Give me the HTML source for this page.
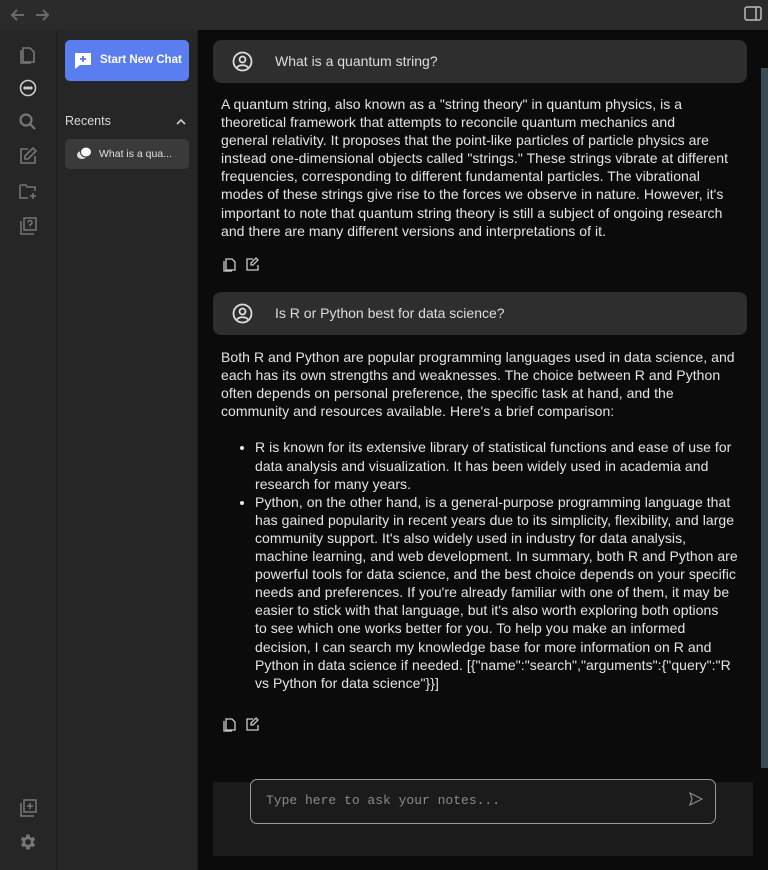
<!DOCTYPE html>
<html><head><style>
*{margin:0;padding:0;box-sizing:border-box}
body{width:768px;height:870px;background:#0b0b0b;font-family:"Liberation Sans","DejaVu Sans",sans-serif;overflow:hidden;position:relative;color:#e6e6e6}
.top{position:absolute;left:0;top:0;width:768px;height:30px;background:#2b2b2b}
.rail{position:absolute;left:0;top:30px;width:57px;height:840px;background:#262626;border-right:1px solid #1e1e1e}
.side{position:absolute;left:57px;top:30px;width:141px;height:840px;background:#262626;border-right:1px solid #1c1c1c}
.ic{position:absolute;left:18px;width:20px;height:20px}
.btn{position:absolute;left:65px;top:40px;width:124px;height:41px;background:#5a7ef0;border-radius:5px;color:#fff;font-weight:bold;font-size:11.5px;line-height:41px;padding-left:35px}
.rec{position:absolute;left:65px;top:114px;color:#d8d8d8;font-size:12.5px}
.item{position:absolute;left:65px;top:139px;width:124px;height:30px;background:#3a3a3a;border-radius:5px;font-size:10.5px;color:#e0e0e0;line-height:30px;padding-left:34px}
.bub{position:absolute;left:213px;width:534px;height:43px;background:#2e2e2e;border-radius:8px;font-size:14px;color:#ddd;line-height:43px;padding-left:62px}
.txt{position:absolute;left:221px;font-size:14px;line-height:18.1px;color:#e4e4e4;white-space:nowrap;letter-spacing:0.05px}
ul{list-style:disc;padding-left:34px}
.act{position:absolute;left:221px}
.scroll{position:absolute;left:761px;top:68px;width:7px;height:700px;background:#3c4b53}
.inarea{position:absolute;left:213px;top:782px;width:540px;height:74px;background:#1b1b1b}
.inp{position:absolute;left:250px;top:779px;width:466px;height:45px;border:1.5px solid #9a9a9a;border-radius:7px;background:#1b1b1b;font-family:"Liberation Mono",monospace;font-size:13px;color:#8a8a8a;line-height:42px;padding-left:15px}
</style></head><body>
<div class="top">
<svg style="position:absolute;left:9px;top:7px" width="40" height="16" viewBox="0 0 40 16" fill="none" stroke="#6a6a6a" stroke-width="2"><path d="M15 8H3M8 3L3 8l5 5"/><path d="M27 8h12M34 3l5 5-5 5"/></svg>
<svg style="position:absolute;left:744px;top:6px" width="18" height="16" viewBox="0 0 18 16" fill="none" stroke="#bbb" stroke-width="1.5"><rect x="1" y="1" width="16" height="13" rx="2"/><path d="M12 1v13"/></svg>
</div>
<div class="rail">
<svg class="ic" style="top:14px" viewBox="0 0 20 20" fill="none" stroke="#777" stroke-width="1.6"><path d="M5 4h7l4 4v10H5z"/><path d="M3 6v13h10"/></svg>
<svg class="ic" style="top:48px" viewBox="0 0 20 20" fill="none" stroke="#ccc" stroke-width="1.6"><circle cx="10" cy="10" r="7.5"/><circle cx="7" cy="10" r=".8" fill="#ccc"/><circle cx="10" cy="10" r=".8" fill="#ccc"/><circle cx="13" cy="10" r=".8" fill="#ccc"/></svg>
<svg class="ic" style="top:82px" viewBox="0 0 20 20" fill="none" stroke="#777" stroke-width="2.2"><circle cx="8" cy="8" r="5.5"/><path d="M12 12l5 5"/></svg>
<svg class="ic" style="top:116px" viewBox="0 0 20 20" fill="none" stroke="#777" stroke-width="1.6"><path d="M10 3H3v14h14v-7"/><path d="M15 2l3 3-8 8H7v-3z"/></svg>
<svg class="ic" style="top:151px" viewBox="0 0 20 20" fill="none" stroke="#777" stroke-width="1.5"><path d="M2 4h6l1 2h8v4M2 4v13h8"/><path d="M15 12v6M12 15h6"/></svg>
<svg class="ic" style="top:186px" viewBox="0 0 20 20" fill="none" stroke="#777" stroke-width="1.5"><rect x="6" y="2" width="12" height="12"/><path d="M3 5v13h13"/><path d="M10 6.5a2 2 0 1 1 2 2v1.5M12 11.5v.5"/></svg>
<svg class="ic" style="top:768px" viewBox="0 0 20 20" fill="none" stroke="#777" stroke-width="1.5"><rect x="6" y="2" width="12" height="12"/><path d="M3 5v13h13M12 5v6M9 8h6"/></svg>
<svg class="ic" style="top:802px" viewBox="0 0 24 24" fill="#777"><path d="M19.4 13a7.5 7.5 0 0 0 0-2l2.1-1.6-2-3.5-2.5 1a7 7 0 0 0-1.7-1L15 3h-4l-.4 2.8a7 7 0 0 0-1.7 1l-2.5-1-2 3.5L6.6 11a7.5 7.5 0 0 0 0 2l-2.1 1.6 2 3.5 2.5-1a7 7 0 0 0 1.7 1L11 21h4l.4-2.8a7 7 0 0 0 1.7-1l2.5 1 2-3.5zM13 15.5a3.5 3.5 0 1 1 0-7 3.5 3.5 0 0 1 0 7z" transform="translate(-1 0)"/></svg>
</div>
<div class="side"></div>
<div class="btn">Start New Chat</div>
<svg style="position:absolute;left:74px;top:52px" width="18" height="18" viewBox="0 0 18 18"><path d="M1 1h16v12H6l-5 4z" fill="#fff"/><path d="M9 4v6M6 7h6" stroke="#5a7ef0" stroke-width="1.8"/></svg>
<div class="rec">Recents</div>
<svg style="position:absolute;left:176px;top:118px" width="10" height="7" viewBox="0 0 10 7" fill="none" stroke="#ccc" stroke-width="1.6"><path d="M1 6l4-4 4 4"/></svg>
<div class="item">What is a qua...</div>
<svg style="position:absolute;left:76px;top:146px" width="16" height="15" viewBox="0 0 16 15"><ellipse cx="6" cy="9" rx="5" ry="4" fill="#ddd"/><ellipse cx="10" cy="6" rx="5.5" ry="5" fill="#fff" stroke="#3a3a3a"/></svg>

<div class="scroll"></div>
<div class="bub" style="top:40px">What is a quantum string?</div>
<svg style="position:absolute;left:232px;top:51px" width="21" height="21" viewBox="0 0 21 21" fill="none" stroke="#ddd" stroke-width="1.8"><circle cx="10.5" cy="10.5" r="9"/><circle cx="10.5" cy="8.5" r="3"/><path d="M5 16.5c2-3 9-3 11 0"/></svg>
<div class="txt" style="top:95px">A quantum string, also known as a "string theory" in quantum physics, is a<br>theoretical framework that attempts to reconcile quantum mechanics and<br>general relativity. It proposes that the point-like particles of particle physics are<br>instead one-dimensional objects called "strings." These strings vibrate at different<br>frequencies, corresponding to different fundamental particles. The vibrational<br>modes of these strings give rise to the forces we observe in nature. However, it's<br>important to note that quantum string theory is still a subject of ongoing research<br>and there are many different versions and interpretations of it.</div>
<svg class="act" style="top:256px" width="40" height="16" viewBox="0 0 40 16" fill="none" stroke="#ccc" stroke-width="1.3"><path d="M5 3h6l3 3v8H5z"/><path d="M3 5v10h8"/><path d="M32 3h-6v11h11V9"/><path d="M35 2l2 2-5 5h-2V7z"/></svg>
<div class="bub" style="top:292px">Is R or Python best for data science?</div>
<svg style="position:absolute;left:232px;top:303px" width="21" height="21" viewBox="0 0 21 21" fill="none" stroke="#ddd" stroke-width="1.8"><circle cx="10.5" cy="10.5" r="9"/><circle cx="10.5" cy="8.5" r="3"/><path d="M5 16.5c2-3 9-3 11 0"/></svg>
<div class="txt" style="top:348px">Both R and Python are popular programming languages used in data science, and<br>each has its own strengths and weaknesses. The choice between R and Python<br>often depends on personal preference, the specific task at hand, and the<br>community and resources available. Here's a brief comparison:<br><br>
<ul><li>R is known for its extensive library of statistical functions and ease of use for<br>data analysis and visualization. It has been widely used in academia and<br>research for many years.</li>
<li>Python, on the other hand, is a general-purpose programming language that<br>has gained popularity in recent years due to its simplicity, flexibility, and large<br>community support. It's also widely used in industry for data analysis,<br>machine learning, and web development. In summary, both R and Python are<br>powerful tools for data science, and the best choice depends on your specific<br>needs and preferences. If you're already familiar with one of them, it may be<br>easier to stick with that language, but it's also worth exploring both options<br>to see which one works better for you. To help you make an informed<br>decision, I can search my knowledge base for more information on R and<br>Python in data science if needed. [{"name":"search","arguments":{"query":"R<br>vs Python for data science"}}]</li></ul></div>
<svg class="act" style="top:716px" width="40" height="16" viewBox="0 0 40 16" fill="none" stroke="#ccc" stroke-width="1.3"><path d="M5 3h6l3 3v8H5z"/><path d="M3 5v10h8"/><path d="M32 3h-6v11h11V9"/><path d="M35 2l2 2-5 5h-2V7z"/></svg>
<div class="inarea"></div>
<div class="inp">Type here to ask your notes...</div>
<svg style="position:absolute;left:689px;top:792px" width="14" height="14" viewBox="0 0 14 14" fill="none" stroke="#888" stroke-width="1.2"><path d="M1 1l12 6-12 6 2-6z"/></svg>
</body></html>
